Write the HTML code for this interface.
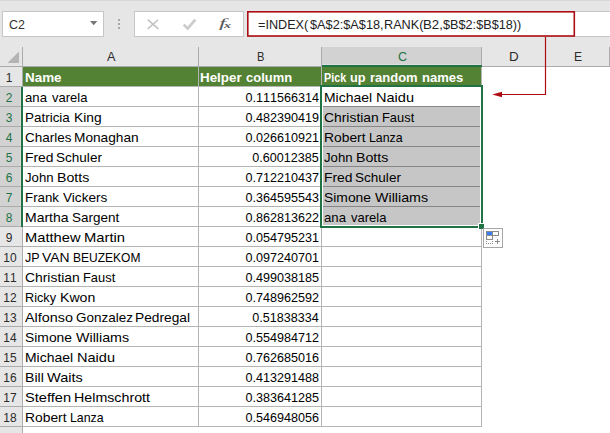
<!DOCTYPE html>
<html><head><meta charset="utf-8"><title>Excel</title>
<style>
html,body{margin:0;padding:0;}
body{width:610px;height:433px;overflow:hidden;background:#fff;position:relative;font-family:"Liberation Sans",sans-serif;font-size:13.0px;color:#000;}
div,span{position:absolute;box-sizing:border-box;}
.t{white-space:nowrap;line-height:20px;height:20px;transform-origin:0 50%;}
.n{font-kerning:none;}
.r{transform-origin:100% 50%;}
.c{transform-origin:50% 50%;}
.hl{background:#ababab;}
.gl{background:#b4b4b4;}
.hd{color:#fff;font-weight:bold;}
</style></head><body>

<div style="left:0;top:0;width:610px;height:47px;background:#e6e6e6"></div>
<div style="left:0;top:0;width:610px;height:1px;background:#d6d6d6"></div>
<div style="left:2px;top:11px;width:102px;height:26px;background:#fff;border:1px solid #c6c6c6"></div>
<span class="t n" style="left:8.68px;top:15px;transform:scaleX(0.9574);color:#333">C2</span>
<svg style="position:absolute;left:89px;top:20px" width="10" height="7" viewBox="0 0 10 7"><path d="M1 1 L8.4 1 L4.7 5.2 Z" fill="#777"/></svg>
<div style="left:118px;top:19px;width:2px;height:2px;background:#a6a6a6"></div>
<div style="left:118px;top:23px;width:2px;height:2px;background:#a6a6a6"></div>
<div style="left:118px;top:27px;width:2px;height:2px;background:#a6a6a6"></div>
<div style="left:134px;top:11px;width:110px;height:26px;background:#fff;border:1px solid #c6c6c6"></div>
<svg style="position:absolute;left:134px;top:11px" width="110" height="26" viewBox="134 11 110 26"><path d="M147.8 19.6 L158.3 28.9 M158 19.7 L147.8 28.9" stroke="#c2c2c2" stroke-width="1.5" fill="none"/><path d="M183.7 24.6 L187.7 28.6 L195.3 19.6" stroke="#cbcbcb" stroke-width="2.7" fill="none"/></svg>
<span style="left:218.62px;top:10.77px;font-family:'Liberation Serif',serif;font-style:italic;font-weight:normal;font-size:13.0px;line-height:24px;height:24px;color:#5a5a5a;white-space:nowrap;transform-origin:0 0;transform:scale(1.9368,1.0043)">f</span>
<span style="left:224.20px;top:15.36px;font-family:'Liberation Serif',serif;font-style:italic;font-weight:bold;font-size:10.0px;line-height:24px;height:24px;color:#5a5a5a;white-space:nowrap;transform-origin:0 0;transform:scale(1.4105,0.8889)">x</span>
<div style="left:247px;top:11px;width:363px;height:26px;background:#fff;border-top:1px solid #c6c6c6;border-bottom:1px solid #c6c6c6"></div>
<span class="t n" style="left:258.47px;top:15px;transform:scaleX(0.9734);color:#222">=INDEX(</span>
<span class="t n" style="left:310.06px;top:15px;transform:scaleX(0.9790);color:#222">$A$2:$A$18,</span>
<span class="t n" style="left:383.52px;top:15px;transform:scaleX(0.9758);color:#222">RANK(</span>
<span class="t n" style="left:423.29px;top:15px;transform:scaleX(1.0145);color:#222">B2,</span>
<span class="t n" style="left:443.26px;top:15px;transform:scaleX(0.9754);color:#222">$B$2:$B$18))</span>
<div style="left:0;top:47px;width:610px;height:19px;background:#e6e6e6"></div>
<div style="left:0;top:67px;width:22px;height:366px;background:#e6e6e6"></div>
<div style="left:322px;top:47px;width:159px;height:18px;background:#d2d2d2"></div>
<div style="left:0;top:87px;width:21px;height:139px;background:#d2d2d2"></div>
<div style="left:20px;top:87px;width:1px;height:139px;background:#dedede"></div>
<div style="left:322px;top:64px;width:159px;height:1px;background:#dedede"></div>
<div class="hl" style="left:0;top:66px;width:610px;height:1px"></div>
<div class="hl" style="left:22px;top:47px;width:1px;height:20px"></div>
<div class="hl" style="left:198px;top:47px;width:1px;height:20px"></div>
<div class="hl" style="left:321px;top:47px;width:1px;height:20px"></div>
<div class="hl" style="left:481px;top:47px;width:1px;height:20px"></div>
<div class="hl" style="left:545px;top:47px;width:1px;height:20px"></div>
<div class="hl" style="left:609px;top:47px;width:1px;height:20px"></div>
<div class="hl" style="left:22px;top:67px;width:1px;height:366px"></div>
<svg style="position:absolute;left:6px;top:50px" width="14" height="14" viewBox="6 50 14 14"><path d="M19 51.5 L19 63 L7.5 63 Z" fill="#b4b4b4"/></svg>
<span class="t " style="left:106.90px;top:47px;transform:scaleX(0.9765);color:#2b2b2b">A</span>
<span class="t " style="left:256.74px;top:47px;transform:scaleX(0.8571);color:#2b2b2b">B</span>
<span class="t " style="left:397.68px;top:47px;transform:scaleX(0.9625);color:#217346">C</span>
<span class="t " style="left:508.57px;top:47px;transform:scaleX(1.0323);color:#2b2b2b">D</span>
<span class="t " style="left:573.67px;top:47px;transform:scaleX(0.9286);color:#2b2b2b">E</span>
<div class="hl" style="left:0;top:86px;width:22px;height:1px"></div>
<span class="t c n" style="left:-1.8px;top:68px;width:22px;text-align:center;color:#2b2b2b;transform:scaleX(0.92)">1</span>
<div class="hl" style="left:0;top:106px;width:22px;height:1px"></div>
<span class="t c n" style="left:-1.8px;top:88px;width:22px;text-align:center;color:#217346;transform:scaleX(0.92)">2</span>
<div class="hl" style="left:0;top:126px;width:22px;height:1px"></div>
<span class="t c n" style="left:-1.8px;top:108px;width:22px;text-align:center;color:#217346;transform:scaleX(0.92)">3</span>
<div class="hl" style="left:0;top:146px;width:22px;height:1px"></div>
<span class="t c n" style="left:-1.8px;top:128px;width:22px;text-align:center;color:#217346;transform:scaleX(0.92)">4</span>
<div class="hl" style="left:0;top:166px;width:22px;height:1px"></div>
<span class="t c n" style="left:-1.8px;top:148px;width:22px;text-align:center;color:#217346;transform:scaleX(0.92)">5</span>
<div class="hl" style="left:0;top:186px;width:22px;height:1px"></div>
<span class="t c n" style="left:-1.8px;top:168px;width:22px;text-align:center;color:#217346;transform:scaleX(0.92)">6</span>
<div class="hl" style="left:0;top:206px;width:22px;height:1px"></div>
<span class="t c n" style="left:-1.8px;top:188px;width:22px;text-align:center;color:#217346;transform:scaleX(0.92)">7</span>
<div class="hl" style="left:0;top:226px;width:22px;height:1px"></div>
<span class="t c n" style="left:-1.8px;top:208px;width:22px;text-align:center;color:#217346;transform:scaleX(0.92)">8</span>
<div class="hl" style="left:0;top:246px;width:22px;height:1px"></div>
<span class="t c n" style="left:-1.8px;top:228px;width:22px;text-align:center;color:#2b2b2b;transform:scaleX(0.92)">9</span>
<div class="hl" style="left:0;top:266px;width:22px;height:1px"></div>
<span class="t c n" style="left:-1.2px;top:248px;width:22px;text-align:center;color:#2b2b2b;transform:scaleX(0.92)">10</span>
<div class="hl" style="left:0;top:286px;width:22px;height:1px"></div>
<span class="t c n" style="left:-1.2px;top:268px;width:22px;text-align:center;color:#2b2b2b;transform:scaleX(0.92)">11</span>
<div class="hl" style="left:0;top:306px;width:22px;height:1px"></div>
<span class="t c n" style="left:-1.2px;top:288px;width:22px;text-align:center;color:#2b2b2b;transform:scaleX(0.92)">12</span>
<div class="hl" style="left:0;top:326px;width:22px;height:1px"></div>
<span class="t c n" style="left:-1.2px;top:308px;width:22px;text-align:center;color:#2b2b2b;transform:scaleX(0.92)">13</span>
<div class="hl" style="left:0;top:346px;width:22px;height:1px"></div>
<span class="t c n" style="left:-1.2px;top:328px;width:22px;text-align:center;color:#2b2b2b;transform:scaleX(0.92)">14</span>
<div class="hl" style="left:0;top:366px;width:22px;height:1px"></div>
<span class="t c n" style="left:-1.2px;top:348px;width:22px;text-align:center;color:#2b2b2b;transform:scaleX(0.92)">15</span>
<div class="hl" style="left:0;top:386px;width:22px;height:1px"></div>
<span class="t c n" style="left:-1.2px;top:368px;width:22px;text-align:center;color:#2b2b2b;transform:scaleX(0.92)">16</span>
<div class="hl" style="left:0;top:406px;width:22px;height:1px"></div>
<span class="t c n" style="left:-1.2px;top:388px;width:22px;text-align:center;color:#2b2b2b;transform:scaleX(0.92)">17</span>
<div class="hl" style="left:0;top:426px;width:22px;height:1px"></div>
<span class="t c n" style="left:-1.2px;top:408px;width:22px;text-align:center;color:#2b2b2b;transform:scaleX(0.92)">18</span>
<div style="left:23px;top:67px;width:175px;height:19px;background:#548235"></div>
<div style="left:199px;top:67px;width:122px;height:19px;background:#548235"></div>
<div style="left:322px;top:67px;width:159px;height:19px;background:#548235"></div>
<div class="gl" style="left:23px;top:86px;width:459px;height:1px"></div>
<div class="gl" style="left:23px;top:106px;width:459px;height:1px"></div>
<div class="gl" style="left:23px;top:126px;width:459px;height:1px"></div>
<div class="gl" style="left:23px;top:146px;width:459px;height:1px"></div>
<div class="gl" style="left:23px;top:166px;width:459px;height:1px"></div>
<div class="gl" style="left:23px;top:186px;width:459px;height:1px"></div>
<div class="gl" style="left:23px;top:206px;width:459px;height:1px"></div>
<div class="gl" style="left:23px;top:226px;width:459px;height:1px"></div>
<div class="gl" style="left:23px;top:246px;width:459px;height:1px"></div>
<div class="gl" style="left:23px;top:266px;width:459px;height:1px"></div>
<div class="gl" style="left:23px;top:286px;width:459px;height:1px"></div>
<div class="gl" style="left:23px;top:306px;width:459px;height:1px"></div>
<div class="gl" style="left:23px;top:326px;width:459px;height:1px"></div>
<div class="gl" style="left:23px;top:346px;width:459px;height:1px"></div>
<div class="gl" style="left:23px;top:366px;width:459px;height:1px"></div>
<div class="gl" style="left:23px;top:386px;width:459px;height:1px"></div>
<div class="gl" style="left:23px;top:406px;width:459px;height:1px"></div>
<div class="gl" style="left:23px;top:426px;width:459px;height:1px"></div>
<div class="gl" style="left:198px;top:67px;width:1px;height:360px"></div>
<div class="gl" style="left:321px;top:67px;width:1px;height:360px"></div>
<div class="gl" style="left:481px;top:67px;width:1px;height:360px"></div>
<div style="left:322px;top:87px;width:159px;height:139px;background:#fff"></div>
<div style="left:323px;top:107px;width:157px;height:118px;background:#c6c6c6"></div>
<div style="left:323px;top:106px;width:157px;height:1px;background:#868686"></div>
<div style="left:323px;top:126px;width:157px;height:1px;background:#868686"></div>
<div style="left:323px;top:146px;width:157px;height:1px;background:#868686"></div>
<div style="left:323px;top:166px;width:157px;height:1px;background:#868686"></div>
<div style="left:323px;top:186px;width:157px;height:1px;background:#868686"></div>
<div style="left:323px;top:206px;width:157px;height:1px;background:#868686"></div>
<span class="t hd" style="left:25.22px;top:68px;transform:scaleX(1.0336);">Name</span>
<span class="t hd" style="left:200.43px;top:68px;transform:scaleX(1.0304);">Helper</span>
<span class="t hd" style="left:245.70px;top:68px;transform:scaleX(0.9978);">column</span>
<span class="t hd" style="left:324.08px;top:68px;transform:scaleX(0.8269);">Pick</span>
<span class="t hd" style="left:350.47px;top:68px;transform:scaleX(0.9793);">up</span>
<span class="t hd" style="left:370.15px;top:68px;transform:scaleX(0.9989);">random</span>
<span class="t hd" style="left:421.55px;top:68px;transform:scaleX(1.0038);">names</span>
<span class="t " style="left:24.99px;top:88px;transform:scaleX(1.0118);">ana</span>
<span class="t " style="left:52.45px;top:88px;transform:scaleX(0.9986);">varela</span>
<span class="t " style="left:24.67px;top:108px;transform:scaleX(1.0343);">Patricia</span>
<span class="t " style="left:74.34px;top:108px;transform:scaleX(1.0598);">King</span>
<span class="t " style="left:24.62px;top:128px;transform:scaleX(1.0368);">Charles</span>
<span class="t " style="left:74.35px;top:128px;transform:scaleX(1.0521);">Monaghan</span>
<span class="t " style="left:24.63px;top:148px;transform:scaleX(1.0680);">Fred</span>
<span class="t " style="left:56.22px;top:148px;transform:scaleX(1.0419);">Schuler</span>
<span class="t " style="left:24.75px;top:168px;transform:scaleX(1.0148);">John</span>
<span class="t " style="left:56.71px;top:168px;transform:scaleX(1.0903);">Botts</span>
<span class="t " style="left:24.68px;top:188px;transform:scaleX(1.0233);">Frank</span>
<span class="t " style="left:62.64px;top:188px;transform:scaleX(1.0467);">Vickers</span>
<span class="t " style="left:24.62px;top:208px;transform:scaleX(1.0759);">Martha</span>
<span class="t " style="left:71.62px;top:208px;transform:scaleX(1.0369);">Sargent</span>
<span class="t " style="left:24.57px;top:228px;transform:scaleX(1.1292);">Matthew</span>
<span class="t " style="left:84.26px;top:228px;transform:scaleX(1.1358);">Martin</span>
<span class="t " style="left:24.76px;top:248px;transform:scaleX(0.9614);">JP</span>
<span class="t " style="left:42.23px;top:248px;transform:scaleX(1.0694);">VAN</span>
<span class="t " style="left:72.68px;top:248px;transform:scaleX(0.9239);">BEUZEKOM</span>
<span class="t " style="left:24.70px;top:268px;transform:scaleX(1.0673);">Christian</span>
<span class="t " style="left:83.41px;top:268px;transform:scaleX(0.9905);">Faust</span>
<span class="t " style="left:24.72px;top:288px;transform:scaleX(0.9756);">Ricky</span>
<span class="t " style="left:59.61px;top:288px;transform:scaleX(1.0862);">Kwon</span>
<span class="t " style="left:25.20px;top:308px;transform:scaleX(1.1041);">Alfonso</span>
<span class="t " style="left:75.62px;top:308px;transform:scaleX(1.0355);">Gonzalez</span>
<span class="t " style="left:134.94px;top:308px;transform:scaleX(1.0567);">Pedregal</span>
<span class="t " style="left:24.70px;top:328px;transform:scaleX(1.0667);">Simone</span>
<span class="t " style="left:75.93px;top:328px;transform:scaleX(1.0974);">Williams</span>
<span class="t " style="left:24.63px;top:348px;transform:scaleX(1.0721);">Michael</span>
<span class="t " style="left:76.88px;top:348px;transform:scaleX(1.1187);">Naidu</span>
<span class="t " style="left:24.62px;top:368px;transform:scaleX(1.0839);">Bill</span>
<span class="t " style="left:47.22px;top:368px;transform:scaleX(1.1168);">Waits</span>
<span class="t " style="left:24.66px;top:388px;transform:scaleX(1.1241);">Steffen</span>
<span class="t " style="left:73.90px;top:388px;transform:scaleX(1.0960);">Helmschrott</span>
<span class="t " style="left:24.63px;top:408px;transform:scaleX(1.0658);">Robert</span>
<span class="t " style="left:70.25px;top:408px;transform:scaleX(0.9507);">Lanza</span>
<span class="t r n" style="right:291.3px;top:88px;transform:scaleX(0.968)">0.111566314</span>
<span class="t r n" style="right:291.3px;top:108px;transform:scaleX(0.968)">0.482390419</span>
<span class="t r n" style="right:291.3px;top:128px;transform:scaleX(0.968)">0.026610921</span>
<span class="t r n" style="right:291.3px;top:148px;transform:scaleX(0.968)">0.60012385</span>
<span class="t r n" style="right:291.3px;top:168px;transform:scaleX(0.968)">0.712210437</span>
<span class="t r n" style="right:291.3px;top:188px;transform:scaleX(0.968)">0.364595543</span>
<span class="t r n" style="right:291.3px;top:208px;transform:scaleX(0.968)">0.862813622</span>
<span class="t r n" style="right:291.3px;top:228px;transform:scaleX(0.968)">0.054795231</span>
<span class="t r n" style="right:291.3px;top:248px;transform:scaleX(0.968)">0.097240701</span>
<span class="t r n" style="right:291.3px;top:268px;transform:scaleX(0.968)">0.499038185</span>
<span class="t r n" style="right:291.3px;top:288px;transform:scaleX(0.968)">0.748962592</span>
<span class="t r n" style="right:291.3px;top:308px;transform:scaleX(0.968)">0.51838334</span>
<span class="t r n" style="right:291.3px;top:328px;transform:scaleX(0.968)">0.554984712</span>
<span class="t r n" style="right:291.3px;top:348px;transform:scaleX(0.968)">0.762685016</span>
<span class="t r n" style="right:291.3px;top:368px;transform:scaleX(0.968)">0.413291488</span>
<span class="t r n" style="right:291.3px;top:388px;transform:scaleX(0.968)">0.383641285</span>
<span class="t r n" style="right:291.3px;top:408px;transform:scaleX(0.968)">0.546948056</span>
<span class="t " style="left:323.63px;top:88px;transform:scaleX(1.0721);">Michael</span>
<span class="t " style="left:375.88px;top:88px;transform:scaleX(1.1188);">Naidu</span>
<span class="t " style="left:323.70px;top:108px;transform:scaleX(1.0673);">Christian</span>
<span class="t " style="left:382.41px;top:108px;transform:scaleX(0.9905);">Faust</span>
<span class="t " style="left:323.63px;top:128px;transform:scaleX(1.0658);">Robert</span>
<span class="t " style="left:369.25px;top:128px;transform:scaleX(0.9507);">Lanza</span>
<span class="t " style="left:323.75px;top:148px;transform:scaleX(1.0148);">John</span>
<span class="t " style="left:355.71px;top:148px;transform:scaleX(1.0903);">Botts</span>
<span class="t " style="left:323.63px;top:168px;transform:scaleX(1.0680);">Fred</span>
<span class="t " style="left:355.22px;top:168px;transform:scaleX(1.0419);">Schuler</span>
<span class="t " style="left:323.70px;top:188px;transform:scaleX(1.0667);">Simone</span>
<span class="t " style="left:374.93px;top:188px;transform:scaleX(1.0974);">Williams</span>
<span class="t " style="left:323.99px;top:208px;transform:scaleX(1.0118);">ana</span>
<span class="t " style="left:351.45px;top:208px;transform:scaleX(0.9986);">varela</span>
<div style="left:320px;top:85px;width:163px;height:143px;border:2px solid #217346"></div>
<div style="left:21px;top:87px;width:2px;height:140px;background:#217346"></div>
<div style="left:322px;top:65px;width:160px;height:2px;background:#217346"></div>
<div style="left:478px;top:223px;width:6px;height:6px;background:#fff"></div>
<div style="left:479px;top:224px;width:5px;height:5px;background:#217346"></div>
<div style="left:483px;top:228px;width:20px;height:20px;background:#fdfdfd;border:1px solid #a6a6a6"></div>
<svg style="position:absolute;left:483px;top:228px" width="20" height="20" viewBox="483 228 20 20" shape-rendering="crispEdges"><rect x="486.5" y="231.5" width="12" height="4" fill="#fff" stroke="#8c8c8c"/><rect x="486.5" y="235.5" width="6" height="4" fill="#fff" stroke="#8c8c8c"/><rect x="487" y="232" width="5" height="3" fill="#3c7df2"/><rect x="492" y="231" width="1" height="5" fill="#8c8c8c"/><g fill="#8c8c8c"><rect x="486" y="241" width="1" height="1"/><rect x="492" y="241" width="1" height="1"/><rect x="486" y="243" width="1" height="1"/><rect x="488" y="243" width="1" height="1"/><rect x="490" y="243" width="1" height="1"/><rect x="492" y="243" width="1" height="1"/><rect x="495" y="241" width="5" height="1"/><rect x="497" y="239" width="1" height="5"/></g></svg>
<svg style="position:absolute;left:245px;top:9px" width="333" height="31" viewBox="245 9 333 31"><rect x="247.8" y="11.8" width="326.5" height="24.2" fill="none" stroke="#ad0d12" stroke-width="1.6"/></svg>
<svg style="position:absolute;left:490px;top:36px" width="60" height="64" viewBox="490 36 60 64"><path d="M545.5 37 V94.5 H501" stroke="#ad0d12" stroke-width="1.2" fill="none"/><path d="M492.3 94.5 L502 91.8 L502 97.2 Z" fill="#ad0d12"/></svg>
</body></html>
